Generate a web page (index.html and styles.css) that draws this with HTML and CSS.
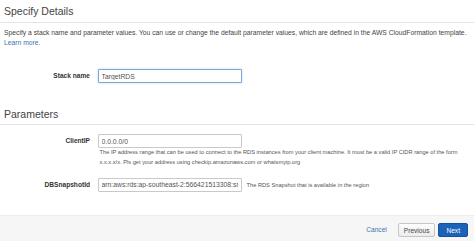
FILE: index.html
```
<!DOCTYPE html>
<html lang="en">

<head>
    <meta charset="UTF-8">
    <meta name="viewport" content="width=device-width, initial-scale=1.0">
    <title>Specify Details</title>
    <link rel="stylesheet" href="styles.css">
</head>

<body>
    <!-- Шапка -->
    <h2 class="section-title">Specify Details</h2>
    <p class="intro">
        Specify a stack name and parameter values. You can use or change the default parameter values, which are defined in the AWS CloudFormation template.<br>
        <a href="#" class="link">Learn more.</a>
    </p>

    <div class="form-row stack-row">
        <label class="field-label">Stack name</label>
        <div class="field">
            <input class="text-input focused" type="text" value="TargetRDS">
        </div>
    </div>

    <!-- Параметры -->
    <h2 class="section-title params-title">Parameters</h2>

    <div class="form-row client-row">
        <label class="field-label">ClientIP</label>
        <div class="field">
            <input class="text-input" type="text" value="0.0.0.0/0">
            <p class="help">The IP address range that can be used to connect to the RDS instances from your client machine. It must be a valid IP CIDR range of the form x.x.x.x/x. Pls get your address using checkip.amazonaws.com or whatsmyip.org</p>
        </div>
    </div>

    <div class="form-row snapshot-row">
        <label class="field-label">DBSnapshotId</label>
        <div class="field inline">
            <input class="text-input" type="text" value="arn:aws:rds:ap-southeast-2:566421513308:snapshot:targetrds">
            <span class="help-inline">The RDS Snapshot that is available in the region</span>
        </div>
    </div>

    <!-- Кнопки -->
    <div class="footer">
        <a href="#" class="link cancel">Cancel</a>
        <button class="btn">Previous</button>
        <button class="btn primary">Next</button>
    </div>
</body>

</html>
```

FILE: styles.css
```
body {
    margin: 0;
    font-family: "Liberation Sans", Arial, sans-serif;
    color: #444;
    background: #fff;
}

/* Заголовки секций */
.section-title {
    margin: 0;
    padding: 4px 4px 4px;
    font-size: 10.5px;
    line-height: 14px;
    font-weight: normal;
    color: #444;
    border-bottom: 1px solid #e4e4e4;
}

.params-title {
    margin-top: 20px;
    padding-bottom: 3px;
}

.intro {
    margin: 0;
    padding: 5px 4px 0;
    font-size: 6.75px;
    line-height: 9.5px;
    color: #444;
}

.link {
    color: #3b74b5;
    text-decoration: none;
}

/* Строки формы */
.form-row {
    display: grid;
    grid-template-columns: 90px 144px;
    column-gap: 7.5px;
    align-items: start;
}

.stack-row {
    margin-top: 22px;
}

.client-row {
    margin-top: 9px;
}

.snapshot-row {
    margin-top: 10.5px;
    grid-template-columns: 90px auto;
}

.field-label {
    text-align: right;
    font-size: 6.6px;
    font-weight: bold;
    line-height: 14px;
    color: #333;
}

.field {
    display: flex;
    flex-direction: column;
}

.field.inline {
    flex-direction: row;
    align-items: center;
    gap: 5px;
}

.text-input {
    box-sizing: border-box;
    width: 144px;
    height: 14px;
    margin: 0;
    padding: 0 3px;
    border: 1px solid #c9c9c9;
    border-radius: 1px;
    font-family: "Liberation Sans", Arial, sans-serif;
    font-size: 6.8px;
    color: #555;
    background: #fff;
    outline: none;
}

.text-input.focused {
    border-color: #7fa6d4;
    box-shadow: 0 0 2px rgba(102, 150, 210, 0.5);
}

.help {
    width: 366px;
    margin: 0;
    padding: 0 0 0 2px;
    font-size: 5.7px;
    line-height: 9.5px;
    color: #555;
}

.help-inline {
    font-size: 5.7px;
    color: #555;
}

/* Подвал */
.footer {
    margin-top: 23px;
    height: 26px;
    box-sizing: border-box;
    padding: 7.5px 6px 0 0;
    display: flex;
    justify-content: flex-end;
    align-items: flex-start;
    gap: 3px;
    background: #f6f6f6;
    border-top: 1px solid #ececec;
}

.cancel {
    font-size: 6.6px;
    line-height: 14px;
    margin-right: 8px;
}

.btn {
    height: 14px;
    padding: 0 5px;
    font-family: "Liberation Sans", Arial, sans-serif;
    font-size: 6.6px;
    color: #444;
    background: linear-gradient(#fdfdfd, #ececec);
    border: 1px solid #c6c6c6;
    border-radius: 2px;
    cursor: pointer;
}

.btn.primary {
    color: #fff;
    background: #1b63b8;
    border-color: #15519a;
    padding: 0 7px;
}
```
